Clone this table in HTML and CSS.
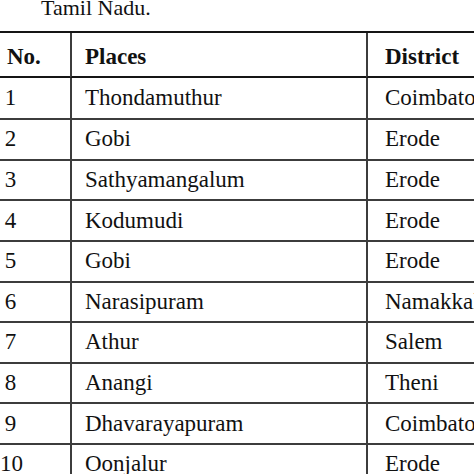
FILE: index.html
```html
<!DOCTYPE html>
<html lang="en">
<head>
<meta charset="utf-8">
<title>Places table</title>
<link rel="stylesheet" href="styles.css">
</head>
<body>
<div class="page">
  <div class="caption">Tamil Nadu.</div>
  <div class="table">
    <div class="cell head c1">No.</div>
    <div class="cell head c2">Places</div>
    <div class="cell head c3">District</div>

    <div class="cell c1 first"><span class="num">1</span></div>
    <div class="cell c2 first">Thondamuthur</div>
    <div class="cell c3 first">Coimbatore</div>

    <div class="cell c1"><span class="num">2</span></div>
    <div class="cell c2">Gobi</div>
    <div class="cell c3">Erode</div>

    <div class="cell c1"><span class="num">3</span></div>
    <div class="cell c2">Sathyamangalum</div>
    <div class="cell c3">Erode</div>

    <div class="cell c1"><span class="num">4</span></div>
    <div class="cell c2">Kodumudi</div>
    <div class="cell c3">Erode</div>

    <div class="cell c1"><span class="num">5</span></div>
    <div class="cell c2">Gobi</div>
    <div class="cell c3">Erode</div>

    <div class="cell c1"><span class="num">6</span></div>
    <div class="cell c2">Narasipuram</div>
    <div class="cell c3">Namakkal</div>

    <div class="cell c1"><span class="num">7</span></div>
    <div class="cell c2">Athur</div>
    <div class="cell c3">Salem</div>

    <div class="cell c1"><span class="num">8</span></div>
    <div class="cell c2">Anangi</div>
    <div class="cell c3">Theni</div>

    <div class="cell c1"><span class="num">9</span></div>
    <div class="cell c2">Dhavarayapuram</div>
    <div class="cell c3">Coimbatore</div>

    <div class="cell c1"><span class="num">10</span></div>
    <div class="cell c2">Oonjalur</div>
    <div class="cell c3">Erode</div>
  </div>
</div>
</body>
</html>
```
FILE: styles.css
```css
html, body {
  margin: 0;
  padding: 0;
  background: #ffffff;
  overflow: hidden;
  width: 474px;
  height: 474px;
}

.page {
  font-family: "Liberation Serif", "Times New Roman", serif;
  color: #111111;
}

.caption {
  font-size: 22px;
  line-height: 22px;
  height: 34px;
  margin-top: -3px;
  padding-left: 41px;
  box-sizing: border-box;
}

.table {
  display: grid;
  grid-template-columns: 70px 296px 220px;
  grid-template-rows: 45px 42px repeat(9, 40.625px);
  width: 586px;
  border-top: 2px solid #151515;
  font-size: 23px;
}

.cell {
  display: flex;
  align-items: center;
  box-sizing: border-box;
  border-bottom: 2px solid #3c3c3c;
  white-space: nowrap;
  overflow: hidden;
}

.head {
  font-weight: bold;
  border-bottom-color: #151515;
  padding-top: 4px;
}

.c1 {
  padding-left: 0;
}

.head.c1 {
  padding-left: 7px;
}

.c2 {
  border-left: 2px solid #3c3c3c;
  padding-left: 13px;
}

.c3 {
  border-left: 2px solid #3c3c3c;
  padding-left: 17px;
}

.num {
  display: inline-block;
  width: 21px;
  text-align: center;
}
```
